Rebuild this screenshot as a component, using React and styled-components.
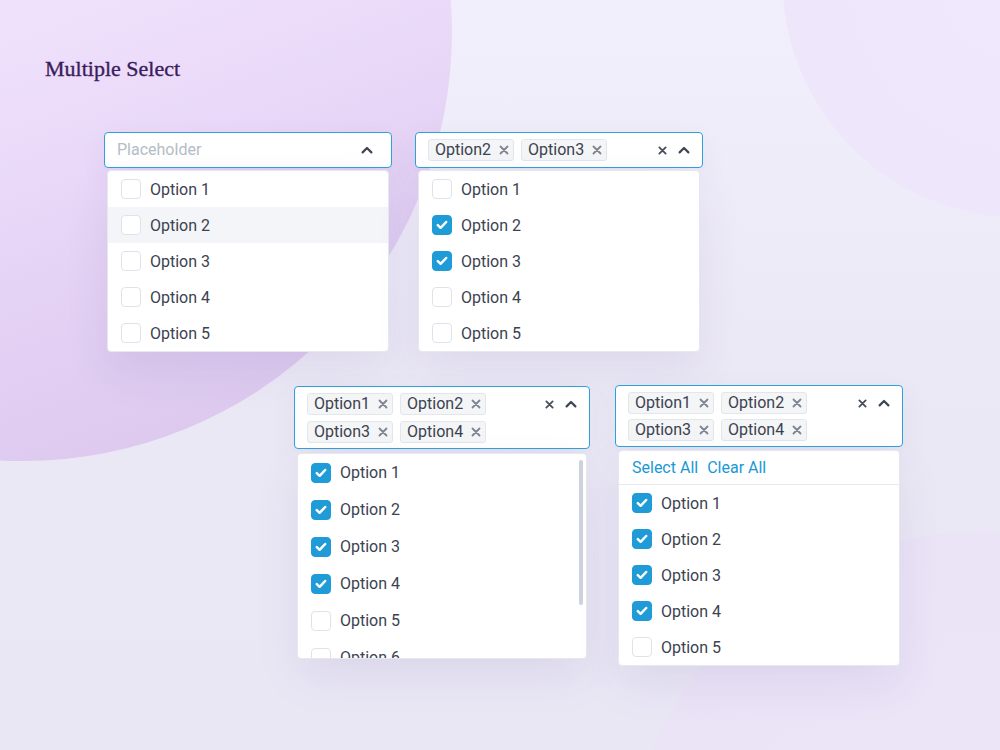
import React from 'react'
import styled, { createGlobalStyle } from 'styled-components'

const GlobalStyle = createGlobalStyle`
  * { box-sizing: border-box; }
  body {
    margin: 0;
    font-family: Roboto, "Liberation Sans", sans-serif;
  }
`

const Page = styled.div`
  position: relative;
  width: 1000px;
  height: 750px;
  overflow: hidden;
  padding: 56px 0 0 45px;
  background:
    radial-gradient(circle 366px at 986px 896px, #ede6f9 0, #ebe4f7 99.6%, transparent 100%),
    radial-gradient(circle 238px at 1020px -20px, #f0e8fc 0, #eee6fb 99.5%, transparent 100%),
    linear-gradient(180deg, #f2effc 0%, #ebe8f5 55%, #eae7f5 100%);

  &::before {
    content: '';
    position: absolute;
    left: -406px;
    top: -397px;
    width: 858px;
    height: 858px;
    border-radius: 50%;
    background: linear-gradient(160deg, #f1e4fd 40%, #ecdcfa 58%, #e2cff3 78%, #d8c4e9 100%);
  }
`

const Title = styled.h1`
  position: relative;
  margin: 0;
  font-family: "Liberation Serif", "DejaVu Serif", serif;
  font-weight: 400;
  font-size: 22px;
  line-height: 26px;
  color: #3a1d5c;
  -webkit-text-stroke: 0.35px #3a1d5c;
`

const Row = styled.div`
  position: relative;
  display: flex;
  align-items: flex-start;
  gap: ${p => p.$gap}px;
  margin: ${p => p.$top}px 0 0 ${p => p.$left}px;
`

const Select = styled.div`
  width: ${p => p.$w || 288}px;
  margin-top: ${p => p.$offset || 0}px;
`

const Control = styled.div`
  display: flex;
  align-items: flex-start;
  min-height: 36px;
  padding: 6px ${p => p.$pr || 12.5}px 5px 12px;
  background: #fff;
  border: 1.5px solid #2fa1da;
  border-radius: 4px;
  box-shadow: 0 10px 30px rgba(70, 60, 130, 0.06);
`

const Placeholder = styled.span`
  flex: 1;
  font-size: 16px;
  line-height: 22px;
  color: #b5bcc7;
`

const Tags = styled.div`
  flex: 1;
  display: flex;
  flex-wrap: wrap;
  gap: ${p => p.$rowGap || 5}px 7px;
`

const Tag = styled.span`
  display: inline-flex;
  align-items: center;
  gap: 8px;
  height: 22px;
  padding: 0 4px 0 6px;
  background: #f4f5f7;
  border: 1px solid #e3e6eb;
  border-radius: 3px;
  font-size: 16px;
  line-height: 20px;
  color: #3b4250;
`

const Actions = styled.div`
  display: flex;
  align-items: center;
  gap: 11px;
  height: 22px;
`

const Menu = styled.div`
  position: relative;
  margin: ${p => p.$gap || 2}px 3px 0;
  background: #fff;
  border: 1px solid #e6e8ee;
  border-radius: 4px;
  box-shadow: 0 18px 45px rgba(70, 60, 130, 0.09);
  overflow: hidden;
`

const ScrollList = styled.div`
  height: 204px;
  overflow: hidden;
`

const Thumb = styled.span`
  position: absolute;
  top: 6px;
  right: 3px;
  width: 4px;
  height: 145px;
  border-radius: 2px;
  background: #cdd3dc;
`

const MenuHead = styled.div`
  display: flex;
  align-items: center;
  gap: 9px;
  height: 34px;
  padding-left: 13px;
  border-bottom: 1px solid #e7e9ee;
`

const LinkButton = styled.span`
  font-size: 16px;
  color: #1a98d6;
`

const Option = styled.div`
  display: flex;
  align-items: center;
  gap: 9px;
  height: ${p => p.$h || 36}px;
  padding-left: 13px;
  background: ${p => (p.$hover ? '#f4f5f8' : 'transparent')};
  font-size: 16px;
  color: #3b4250;
`

const Box = styled.span`
  flex: none;
  display: flex;
  align-items: center;
  justify-content: center;
  width: 20px;
  height: 20px;
  border-radius: 4px;
  background: ${p => (p.$on ? '#1f9bd7' : '#fff')};
  border: 1px solid ${p => (p.$on ? '#1f9bd7' : '#dfe3e9')};
`

const Check = () => (
  <svg width='12' height='10' viewBox='0 0 12 10'>
    <path d='M1.8 5.2 L4.6 7.8 L10.2 2' fill='none' stroke='#fff' strokeWidth='2.5' strokeLinecap='round' strokeLinejoin='round' />
  </svg>
)

const Cross = ({ size = 9, color = '#7d8593', width = 1.8 }) => (
  <svg width={size} height={size} viewBox='0 0 10 10'>
    <path d='M1.5 1.5 L8.5 8.5 M8.5 1.5 L1.5 8.5' stroke={color} strokeWidth={width} strokeLinecap='round' />
  </svg>
)

const Chevron = () => (
  <svg width='12' height='8' viewBox='0 0 12 8'>
    <path d='M1.6 6.4 L6 2 L10.4 6.4' fill='none' stroke='#3f4654' strokeWidth='2.2' strokeLinecap='round' strokeLinejoin='round' />
  </svg>
)

const Clear = () => <Cross size={9} color='#464d5a' width={2} />

const TagItem = ({ label }) => (
  <Tag>
    {label}
    <Cross size={10} />
  </Tag>
)

const OptionItem = ({ label, on, hover, h }) => (
  <Option $hover={hover} $h={h}>
    <Box $on={on}>{on && <Check />}</Box>
    {label}
  </Option>
)

const five = ['Option 1', 'Option 2', 'Option 3', 'Option 4', 'Option 5']
const seven = [...five, 'Option 6', 'Option 7']
const tags = ['Option1', 'Option2', 'Option3', 'Option4']

export default function App () {
  return (
    <Page>
      <GlobalStyle />
      <Title>Multiple Select</Title>

      <Row $top={50} $left={59} $gap={23}>
        <Select>
          <Control $pr={18.5}>
            <Placeholder>Placeholder</Placeholder>
            <Actions><Chevron /></Actions>
          </Control>
          <Menu>
            {five.map((o, i) => <OptionItem key={o} label={o} hover={i === 1} />)}
          </Menu>
        </Select>

        <Select>
          <Control>
            <Tags>
              <TagItem label='Option2' />
              <TagItem label='Option3' />
            </Tags>
            <Actions><Clear /><Chevron /></Actions>
          </Control>
          <Menu>
            {five.map((o, i) => <OptionItem key={o} label={o} on={i === 1 || i === 2} />)}
          </Menu>
        </Select>
      </Row>

      <Row $top={33} $left={249} $gap={25}>
        <Select $w={296} $offset={1}>
          <Control>
            <Tags $rowGap={6}>
              {tags.map(t => <TagItem key={t} label={t} />)}
            </Tags>
            <Actions><Clear /><Chevron /></Actions>
          </Control>
          <Menu $gap={4}>
            <ScrollList>
              {seven.map((o, i) => <OptionItem key={o} label={o} on={i < 4} h={37} />)}
            </ScrollList>
            <Thumb />
          </Menu>
        </Select>

        <Select>
          <Control>
            <Tags>
              {tags.map(t => <TagItem key={t} label={t} />)}
            </Tags>
            <Actions><Clear /><Chevron /></Actions>
          </Control>
          <Menu $gap={3}>
            <MenuHead>
              <LinkButton>Select All</LinkButton>
              <LinkButton>Clear All</LinkButton>
            </MenuHead>
            {five.map((o, i) => <OptionItem key={o} label={o} on={i < 4} />)}
          </Menu>
        </Select>
      </Row>
    </Page>
  )
}
